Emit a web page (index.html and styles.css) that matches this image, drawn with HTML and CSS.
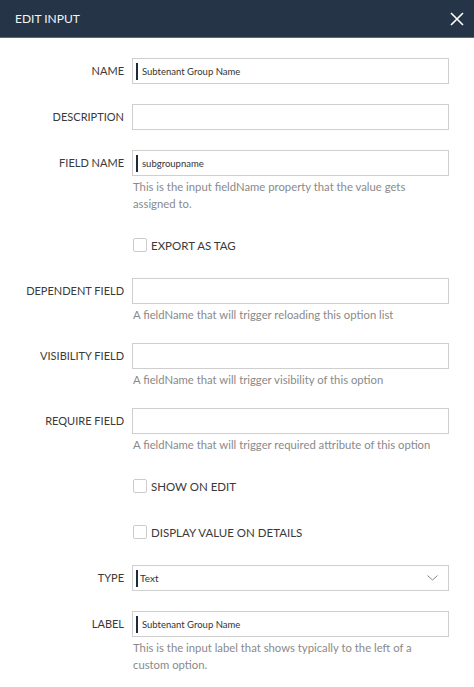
FILE: index.html
```html
<!DOCTYPE html>
<html lang="en">
<head>
<meta charset="utf-8">
<title>Edit Input</title>
<link rel="stylesheet" href="styles.css">
</head>
<body>
<div class="modal">
  <header class="modal-header">
    <h1 class="modal-title">EDIT INPUT</h1>
    <button class="close-btn" aria-label="Close">
      <svg width="14" height="14" viewBox="0 0 14 14"><path d="M1 1 L13 13 M13 1 L1 13" stroke="#ffffff" stroke-width="1.6" fill="none"/></svg>
    </button>
  </header>
  <form class="modal-body">
    <div class="row">
      <label class="row-label">NAME</label>
      <div class="row-field">
        <div class="input focused"><span class="caret"></span><span class="value">Subtenant Group Name</span></div>
      </div>
    </div>
    <div class="row">
      <label class="row-label">DESCRIPTION</label>
      <div class="row-field"><div class="input"></div></div>
    </div>
    <div class="row">
      <label class="row-label">FIELD NAME</label>
      <div class="row-field">
        <div class="input focused"><span class="caret"></span><span class="value">subgroupname</span></div>
        <p class="help">This is the input fieldName property that the value gets assigned to.</p>
      </div>
    </div>
    <div class="row">
      <span class="row-label"></span>
      <div class="row-field check"><span class="box"></span><span class="check-text">EXPORT AS TAG</span></div>
    </div>
    <div class="row">
      <label class="row-label">DEPENDENT FIELD</label>
      <div class="row-field">
        <div class="input"></div>
        <p class="help">A fieldName that will trigger reloading this option list</p>
      </div>
    </div>
    <div class="row">
      <label class="row-label">VISIBILITY FIELD</label>
      <div class="row-field">
        <div class="input"></div>
        <p class="help">A fieldName that will trigger visibility of this option</p>
      </div>
    </div>
    <div class="row">
      <label class="row-label">REQUIRE FIELD</label>
      <div class="row-field">
        <div class="input"></div>
        <p class="help">A fieldName that will trigger required attribute of this option</p>
      </div>
    </div>
    <div class="row">
      <span class="row-label"></span>
      <div class="row-field check"><span class="box"></span><span class="check-text">SHOW ON EDIT</span></div>
    </div>
    <div class="row">
      <span class="row-label"></span>
      <div class="row-field check"><span class="box"></span><span class="check-text">DISPLAY VALUE ON DETAILS</span></div>
    </div>
    <div class="row">
      <label class="row-label">TYPE</label>
      <div class="row-field">
        <div class="input select"><span class="caret"></span><span class="value sel-value">Text</span>
          <svg class="chevron" width="11" height="6" viewBox="0 0 11 6"><path d="M0.5 0.5 L5.5 5 L10.5 0.5" stroke="#888" stroke-width="1" fill="none"/></svg>
        </div>
      </div>
    </div>
    <div class="row">
      <label class="row-label">LABEL</label>
      <div class="row-field">
        <div class="input focused"><span class="caret"></span><span class="value">Subtenant Group Name</span></div>
        <p class="help">This is the input label that shows typically to the left of a custom option.</p>
      </div>
    </div>
  </form>
</div>
</body>
</html>
```
FILE: styles.css
```css
* { box-sizing: border-box; }
html, body { margin: 0; padding: 0; background: #ffffff; }
body { font-family: "Lato", "Open Sans", sans-serif; color: #333333; }

.modal { width: 474px; }

.modal-header {
  height: 38px;
  background: #253446;
  border-bottom: 1px solid #5d6875;
  display: flex;
  align-items: center;
  justify-content: space-between;
  padding: 0 10px 0 15px;
}
.modal-title {
  margin: 0;
  font-size: 12px;
  font-weight: 400;
  color: #f4f5f7;
}
.close-btn {
  background: none;
  border: 0;
  padding: 0;
  width: 14px;
  height: 14px;
  display: flex;
}

.modal-body {
  padding: 20px 25px 0 0;
  display: flex;
  flex-direction: column;
  gap: 20px;
}

.row {
  display: grid;
  grid-template-columns: 124px 1fr;
  column-gap: 8px;
  align-items: start;
}
.row-label {
  text-align: right;
  font-size: 11px;
  line-height: 26px;
  color: #3a3a3a;
}
.row-field { min-width: 0; }

.input {
  height: 26px;
  border: 1px solid #cfcfcf;
  background: #ffffff;
  display: flex;
  align-items: center;
  padding-left: 3px;
}
.caret {
  width: 2px;
  height: 17px;
  background: #1f2a3a;
  margin-right: 4px;
}
.value {
  font-size: 9.5px;
  color: #333333;
}
.sel-value { margin-left: -2px; font-size: 10px; }
.chevron { margin-left: auto; margin-right: 10px; }

.help {
  margin: 2px 0 0 1px;
  font-size: 11.3px;
  line-height: 17px;
  color: #8a8a8a;
  padding-right: 10px;
}

.check {
  display: flex;
  align-items: center;
  height: 26px;
  padding-left: 1px;
}
.box {
  width: 14px;
  height: 14px;
  border: 1px solid #cccccc;
  border-radius: 2px;
  margin-right: 4px;
}
.check-text {
  font-size: 11.5px;
  color: #3a3a3a;
}
```
